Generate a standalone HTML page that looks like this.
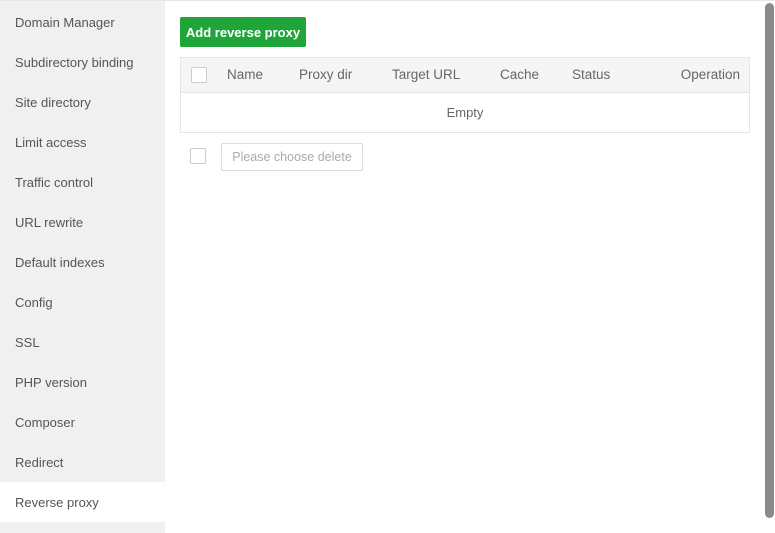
<!DOCTYPE html><html><head><style>
body{margin:0;width:775px;height:533px;background:#fff;font-family:"Liberation Sans",sans-serif;font-size:13px;color:#555;position:relative;overflow:hidden}
.top{position:absolute;left:0;top:0;width:775px;height:1px;background:#e6e6e6}
.side{position:absolute;left:0;top:1px;width:165px;height:532px;background:#f0f0f0}
.side div{position:absolute;left:0;width:165px;height:40px;line-height:42px;padding-left:15px;box-sizing:border-box;color:#555}
.side .act{background:#fff}
.btn{position:absolute;left:180px;top:17px;width:126px;height:30px;background:#20a53a;color:#fff;border-radius:2px;line-height:31px;text-align:center;font-size:13px;font-weight:bold}
.tbl{position:absolute;left:180px;top:57px;width:568px;height:74px;border:1px solid #e6e6e6}
.hd{height:34px;background:#f5f5f5;border-bottom:1px solid #e6e6e6;position:relative}
.hd span{position:absolute;top:0;line-height:34px;color:#666;font-size:13.5px}
.cb{position:absolute;width:14px;height:14px;border:1px solid #ccc;background:#fff;border-radius:2px}
.empty{text-align:center;line-height:39px;color:#666}
.del{position:absolute;left:221px;top:143px;width:140px;height:26px;border:1px solid #ddd;border-radius:2px;color:#aaa;line-height:27px;text-align:center;font-size:12.5px}
.sb{position:absolute;left:765px;top:3px;width:9px;height:515px;background:#8a8a8a;border-radius:5px}
</style></head><body>
<div class="top"></div>
<div class="side">
<div style="top:1px">Domain Manager</div>
<div style="top:41px">Subdirectory binding</div>
<div style="top:81px">Site directory</div>
<div style="top:121px">Limit access</div>
<div style="top:161px">Traffic control</div>
<div style="top:201px">URL rewrite</div>
<div style="top:241px">Default indexes</div>
<div style="top:281px">Config</div>
<div style="top:321px">SSL</div>
<div style="top:361px">PHP version</div>
<div style="top:401px">Composer</div>
<div style="top:441px">Redirect</div>
<div class="act" style="top:481px">Reverse proxy</div>
</div>
<div class="btn">Add reverse proxy</div>
<div class="tbl"><div class="hd">
<div class="cb" style="left:10px;top:9px"></div>
<span style="left:46px">Name</span><span style="left:118px">Proxy dir</span><span style="left:211px">Target URL</span><span style="left:319px">Cache</span><span style="left:391px">Status</span><span style="right:9px">Operation</span>
</div><div class="empty">Empty</div></div>
<div class="cb" style="left:190px;top:148px"></div>
<div class="del">Please choose delete</div>
<div class="sb"></div>
</body></html>
